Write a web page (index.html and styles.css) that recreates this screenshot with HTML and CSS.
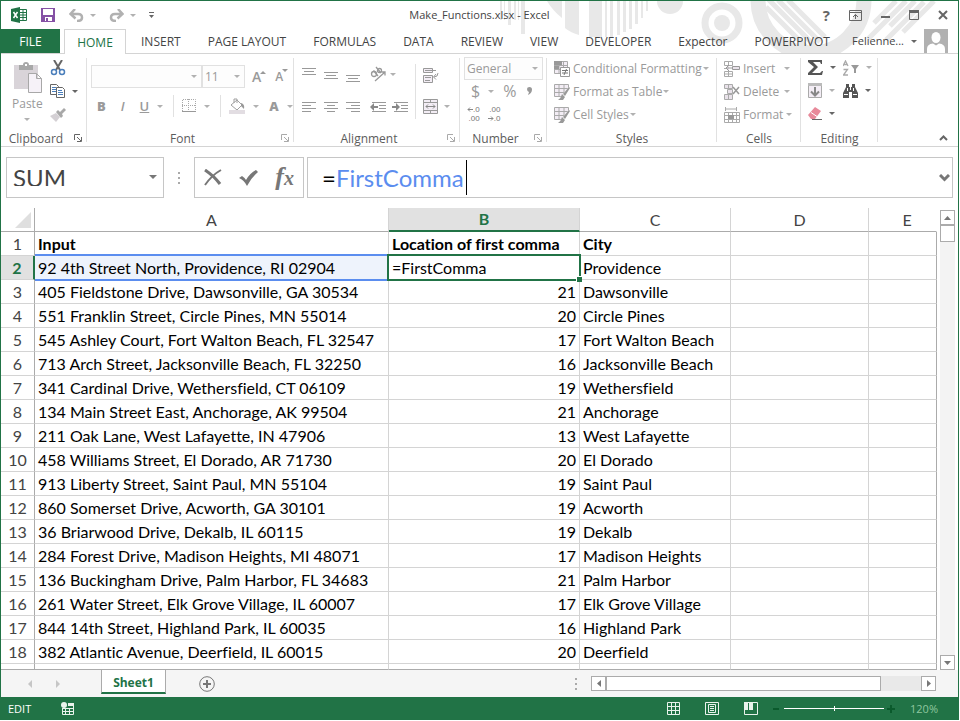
FILE: index.html
```html
<!DOCTYPE html>
<html lang="en">
<head>
<meta charset="utf-8">
<title>Make_Functions.xlsx - Excel</title>
<link rel="stylesheet" href="styles.css">
</head>
<body>
<div class="window">
  <svg class="art" viewBox="490 1 468 52" width="468" height="52" aria-hidden="true">
    <g fill="#e8e8e8">
      <path d="M500 1h2v19h-2zM504 1h1v19h-1zM508 1h3v24h-3zM514 1h2v19h-2zM518 1h1v19h-1zM521 1h4v33h-4z"/>
      <path d="M547 1h15v17q-9-7-15-17zM565 1h14v34q-8-2-14-7zM589 1h13v36h-13zM605 1h2v36h-2zM610 1h3v36h-3zM617 1h3v34h-3zM623 1h3v31h-3zM629 1h3v28h-3zM635 1h3v23h-3zM641 1h2v17h-2zM646 1h2v10h-2z"/>
      <circle cx="670" cy="1" r="13"/><circle cx="722" cy="23" r="8"/>
    </g>
    <g fill="none" stroke="#e8e8e8">
      <circle cx="722" cy="23" r="17" stroke-width="7"/>
      <circle cx="811" cy="0" r="53" stroke-width="15"/>
      <path stroke-width="5" d="M766 7l43 43M768 -1l47 47M778 0l42 42M788 0l37 37"/>
      <path stroke-width="5" d="M874 23l22-22M868 39l38-38M890 26l25-25M886 40l38-38M903 32l31-31"/>
    </g>
  </svg>

  <header class="titlebar">
    <div class="quick">
      <svg width="16" height="16"><path fill="#217346" d="M0 2l9-2v16l-9-2z"/><path fill="none" stroke="#217346" d="M9 2.500h6.500v11H9M9 5.500h6M9 8h6M9 10.500h6M12 3v10"/><path stroke="#fff" stroke-width="1.500" d="M2.500 5l4 6M6.500 5l-4 6"/></svg>
      <button aria-label="Save"><svg width="14" height="14"><path fill="#8551a5" d="M0 0h14v14H0z"/><path fill="#fff" d="M2 1h10v6H2zM4 9h7v4H4z"/><path fill="#8551a5" d="M5 10h2v3H5z"/></svg></button>
      <button class="wide" aria-label="Undo"><svg width="15" height="13"><path fill="none" stroke="#b1b1b1" stroke-width="2.500" d="M2 5h7q4 0 4 3.500T8 12M6 0L1.500 5l5 4.500"/></svg><i class="caret"></i></button>
      <button class="wide" aria-label="Redo"><svg width="15" height="13"><path fill="none" stroke="#b1b1b1" stroke-width="2.500" d="M13 5H6q-4 0-4 3.500T7 12M9 0l4.500 5-5 4.500"/></svg><i class="caret"></i></button>
      <button aria-label="Customize"><svg width="5" height="7"><path fill="#666" d="M0 0h5v1H0zM0 3h5L2.500 6z"/></svg></button>
    </div>
    <h1>Make_Functions.xlsx - Excel</h1>
    <div class="controls">
      <button class="help" aria-label="Help">?</button>
      <button aria-label="Ribbon options"><svg width="13" height="11"><path fill="none" stroke="#666" d="M.500.500h12v10H.500zM1 2.500h11M6.500 9V4.500M4 7l2.500-2.500L9 7"/></svg></button>
      <button aria-label="Minimize"><svg width="9" height="11"><path fill="#666" d="M0 6h9v2H0z"/></svg></button>
      <button aria-label="Maximize"><svg width="10" height="10"><path fill="none" stroke="#666" d="M.500 1h9v8.500h-9z"/><path fill="#666" d="M0 0h10v3H0z"/></svg></button>
      <button aria-label="Close"><svg width="10" height="10"><path stroke="#666" stroke-width="2" d="M1 1l8 8M9 1L1 9"/></svg></button>
    </div>
  </header>

  <nav class="tabs">
    <button class="file">FILE</button><button class="active">HOME</button><button>INSERT</button><button>PAGE LAYOUT</button><button>FORMULAS</button><button>DATA</button><button>REVIEW</button><button>VIEW</button><button>DEVELOPER</button><button>Expector</button><button class="last">POWERPIVOT</button>
    <button class="user">Felienne...<i class="caret dark"></i></button>
    <svg class="avatar" width="24" height="24"><path fill="#b1b1b1" d="M0 0h24v24H0z"/><g fill="#fff"><ellipse cx="12" cy="8.500" rx="4.500" ry="5.500"/><path d="M3 24v-4q0-5 6-5.500l3 2 3-2q6 .5 6 5.500v4z"/></g></svg>
  </nav>

  <section class="ribbon">
    <div class="group clipboard">
      <div class="body">
        <button class="paste"><svg width="28" height="31"><path fill="#d9d4d9" d="M0 3h24v24H0z"/><path fill="#a8a8a8" d="M5 3h4q0-3 3-3t3 3h4v5H5z"/><path fill="#fff" d="M11 2h2v2h-2z"/><path fill="#f6f2f8" stroke="#a8a8a8" d="M14.500 11.500h8l5 5v14h-13zM22.500 11.500v5h5"/></svg><span>Paste</span><i class="caret"></i></button>
        <div class="stack">
          <button aria-label="Cut"><svg width="16" height="16"><path stroke="#666" stroke-width="2" d="M4 0l6 10M12 0L6 10"/><g fill="none" stroke="#4a7ebb" stroke-width="1.500"><circle cx="4" cy="12" r="2.500"/><circle cx="12" cy="12" r="2.500"/></g></svg></button>
          <button aria-label="Copy"><svg width="16" height="15"><path fill="#fff" stroke="#666" d="M.500.500h6l2 2v8h-8z"/><path stroke="#4a7ebb" d="M2 3.500h4M2 5.500h4M2 7.500h4"/><path fill="#fff" stroke="#666" d="M6.500 3.500h6l2 2v8h-8z"/><path stroke="#4a7ebb" d="M8 6.500h4M8 8.500h5M8 10.500h5"/></svg><i class="caret dark"></i></button>
          <button aria-label="Format Painter"><svg width="16" height="15"><path fill="#d4d0d4" d="M0 9l6-3 4 4-4 5z"/><path fill="#a8a8a8" d="M6 5l2-2 2 2 4-4 2 2-4 4 1 2-2 2z"/></svg></button>
        </div>
      </div>
      <h2>Clipboard</h2><svg class="launch dark" width="8" height="8"><use href="#launch"/></svg>
    </div>

    <div class="group font">
      <div class="body">
        <div class="line top">
          <span class="drop name"><select aria-label="Font"><option></option></select></span><span class="drop size"><select aria-label="Font size"><option>11</option></select></span>
          <button class="glyph grow" aria-label="Grow font">A<i class="up"></i></button>
          <button class="glyph shrink" aria-label="Shrink font">A<i class="down"></i></button>
        </div>
        <div class="line low">
          <button class="glyph"><b>B</b></button><button class="glyph"><em>I</em></button><button class="glyph u"><u>U</u><i class="caret"></i></button><i class="bar"></i>
          <button aria-label="Borders"><svg width="14" height="14"><path fill="none" stroke="#a8a8a8" stroke-dasharray="1 1" d="M.500 12V.500h13V12M6.500 0v13M0 6.500h13"/><path fill="#999" d="M0 12h14v1H0z"/></svg><i class="caret"></i></button><i class="bar"></i>
          <button aria-label="Fill color"><svg width="16" height="16"><path fill="#fff" stroke="#a0a0a0" d="M2 7l6-5 5 5-5 5zM5 5V1h3v4"/><path fill="#999" d="M12 5q4 1 3 6l-3-3z"/><path fill="#e2dde2" d="M0 12h16v4H0z"/></svg><i class="caret"></i></button>
          <button class="glyph"><b>A</b><i class="caret"></i></button>
        </div>
      </div>
      <h2>Font</h2><svg class="launch" width="8" height="8"><use href="#launch"/></svg>
    </div>

    <div class="group align">
      <div class="body">
        <div class="aligns">
          <div class="line top">
            <button aria-label="Top"><svg width="14" height="16"><path stroke="#999" d="M0 2.500h14M2 5.500h10M0 8.500h14"/></svg></button>
            <button aria-label="Middle"><svg width="14" height="16"><path stroke="#999" d="M0 6.500h14M2 9.500h10M0 12.500h14"/></svg></button>
            <button aria-label="Bottom"><svg width="14" height="16"><path stroke="#999" d="M0 9.500h14M2 12.500h10M0 15.500h14"/></svg></button>
            <button class="orient" aria-label="Orientation"><svg width="16" height="16"><g fill="none" stroke="#999" stroke-width="1.300"><circle cx="4" cy="8" r="2.500"/><path d="M3.500 4.500L8 10M6 1l5 6"/><circle cx="9.500" cy="4.500" r="2"/><path d="M5 15L15 6M11.500 6H15v3.500"/></g></svg><i class="caret"></i></button>
          </div>
          <div class="line low">
            <button aria-label="Left"><svg width="14" height="12"><path stroke="#999" d="M0 1.500h14M0 4.500h9M0 7.500h14M0 10.500h9"/></svg></button>
            <button aria-label="Center"><svg width="14" height="12"><path stroke="#999" d="M0 1.500h14M3 4.500h8M0 7.500h14M3 10.500h8"/></svg></button>
            <button aria-label="Right"><svg width="14" height="12"><path stroke="#999" d="M0 1.500h14M5 4.500h9M0 7.500h14M5 10.500h9"/></svg></button>
            <button class="orient" aria-label="Decrease indent"><svg width="16" height="12"><path stroke="#999" d="M2 1.500h14M9 4.500h7M9 7.500h7M2 10.500h14"/><path fill="#888" d="M0 6l4-4v3h4v2H4v3z"/></svg></button>
            <button aria-label="Increase indent"><svg width="16" height="12"><path stroke="#999" d="M2 1.500h14M9 4.500h7M9 7.500h7M2 10.500h14"/><path fill="#888" d="M8 6L4 2v3H0v2h4v3z"/></svg></button>
          </div>
        </div>
        <i class="bar tall"></i>
        <div class="wraps">
          <button aria-label="Wrap text"><svg width="16" height="15"><path fill="#f3edf5" stroke="#999" d="M.500.500h9v4h-9zM.500 7.500h9v7h-9z"/><path stroke="#999" fill="none" d="M2 2.500h11M2 9.500h6M2 12.500h5M15 5q0 4-4 4M13 6l-2.500 3L13 11.500"/></svg></button>
          <button aria-label="Merge"><svg width="15" height="15"><path fill="#f3edf5" stroke="#999" d="M.500.500h14v14H.500zM0 3.500h15M0 11.500h15M7.500 0v3M7.500 12v3"/><path fill="none" stroke="#888" d="M3 7.500h9M5 5.500l-2 2 2 2M10 5.500l2 2-2 2"/></svg><i class="caret"></i></button>
        </div>
      </div>
      <h2>Alignment</h2><svg class="launch" width="8" height="8"><use href="#launch"/></svg>
    </div>

    <div class="group number">
      <div class="body">
        <span class="drop"><select aria-label="Number format"><option>General</option></select></span>
        <div class="line marks"><button>$<i class="caret"></i></button><button>%</button><button class="comma" aria-label="Comma style"><svg width="5" height="8"><path fill="#999" d="M0 2q0-2 2.500-2T5 2.500Q5 6 1 8l1-3Q0 4.500 0 2z"/></svg></button></div>
        <div class="line decimals"><button aria-label="Increase decimal"><span><svg width="6" height="5"><path fill="none" stroke="#888" d="M6 2.500H1M3 .500l-2 2 2 2"/></svg>.0</span><span>.00</span></button><button aria-label="Decrease decimal"><span>.00</span><span><svg width="6" height="5"><path fill="none" stroke="#888" d="M0 2.500h5M3 .500l2 2-2 2"/></svg>.0</span></button></div>
      </div>
      <h2>Number</h2><svg class="launch" width="8" height="8"><use href="#launch"/></svg>
    </div>

    <div class="group list styles">
      <div class="body">
        <button><svg width="16" height="16"><path fill="#f3edf5" stroke="#aaa" d="M.500.500h13v12H.500zM5 0v12M9.500 0v12M0 4.500h14M0 8.500h14"/><path fill="#999" d="M0 0h8v4H0zM0 5h5v3H0z"/><path fill="#fff" stroke="#999" d="M6.500 6.500h9v9h-9z"/><path stroke="#777" d="M8 9.500h6M8 12h6M12.500 8L10 14"/></svg>Conditional Formatting<i class="caret"></i></button>
        <button><svg width="16" height="16"><use href="#tablebrush"/></svg>Format as Table<i class="caret"></i></button>
        <button><svg width="16" height="16"><use href="#tablebrush"/></svg>Cell Styles<i class="caret"></i></button>
      </div>
      <h2>Styles</h2>
    </div>

    <div class="group list cells">
      <div class="body">
        <button><svg width="16" height="16"><path fill="none" stroke="#aaa" d="M.500.500h8v4h-8zM4.500 0v4M.500 10.500h8v5h-8zM4.500 10v6M0 7.500h3M0 13h9"/><path fill="#e9e2ea" stroke="#999" d="M8.500 5.500h7v3h-7zM8 7H2M5 4L2 7l3 3"/></svg>Insert<i class="caret"></i></button>
        <button><svg width="16" height="16"><path fill="#e9e2ea" stroke="#aaa" d="M.500.500h8v4h-8zM4.500 0v4M3.500 5.500h5v4h-5zM.500 10.500h8v5h-8zM4.500 10v6"/><path stroke="#999" stroke-width="1.500" d="M9 3l6 7M15 3L9 10"/></svg>Delete<i class="caret"></i></button>
        <button><svg width="16" height="16"><path fill="none" stroke="#aaa" d="M1.500 0v4M1 2h12M12.500 0v4M.500 5.500h15v10H.500zM4.500 5v10M8.500 5v10M12.500 5v10M0 8.500h16M0 12.500h16"/><path fill="#999" d="M4 8h6v4H4z"/></svg>Format<i class="caret"></i></button>
      </div>
      <h2>Cells</h2>
    </div>

    <div class="group editing">
      <div class="body">
        <button aria-label="Sum"><svg width="15" height="15"><path fill="#555" d="M0 0h14v4h-1l-1-2H5l5 5-6 6h8l2-2h1l-1 4H0v-2l6-6-6-5z"/></svg><i class="caret dark"></i></button>
        <button aria-label="Sort"><svg width="16" height="16"><path fill="none" stroke="#aaa" stroke-width="1.300" d="M0 6L2.500 1 5 6M1 4.500h3M.500 9.500h4L.500 15H5"/><path fill="#999" d="M8 5h8l-3 4v4h-2V9z"/></svg><i class="caret"></i></button>
        <button aria-label="Fill"><svg width="14" height="15"><path fill="#f3edf5" stroke="#aaa" d="M.500.500h13v14H.500z"/><path fill="#bbb" d="M0 0h14v3H0z"/><path fill="none" stroke="#888" stroke-width="2" d="M7 4v8M3 8.500l4 4 4-4"/></svg><i class="caret"></i></button>
        <button aria-label="Find"><svg width="15" height="14"><path fill="#555" d="M3 0h3v3h3V0h3v3l3 6v5H9V8H6v6H0V9l3-6z"/><path stroke="#fff" d="M1 10.500h4M10 10.500h4M4.500 4v3M10.500 4v3M7.500 3v3"/></svg><i class="caret dark"></i></button>
        <button aria-label="Clear"><svg width="14" height="14"><path fill="#e8899a" d="M0 8l7-8 6 4-6 8H3z"/><path fill="none" stroke="#fff" d="M3 5.500l6 4"/><path fill="#666" d="M4 12h10v1H4z"/></svg><i class="caret dark"></i></button>
      </div>
      <h2>Editing</h2>
    </div>
    <button class="collapse" aria-label="Collapse ribbon"><svg width="9" height="6"><path fill="none" stroke="#666" stroke-width="2" d="M1 5l3.500-3.500L8 5"/></svg></button>
  </section>

  <section class="formula">
    <span class="drop namebox"><select aria-label="Name box"><option>SUM</option></select></span>
    <svg class="grip" width="2" height="12"><use href="#dots"/></svg>
    <div class="actions">
      <button aria-label="Cancel"><svg width="18" height="17"><path fill="none" stroke="#777" stroke-width="3" d="M1 1q9 6 15 14"/><path fill="none" stroke="#777" stroke-width="2" d="M17 1Q8 6 1 16"/></svg></button>
      <button aria-label="Enter"><svg width="20" height="16"><path fill="#777" d="M0 8l3-2q3 2 4 4Q11 3 17 0l2 2Q12 8 8 16 5 10 0 8z"/></svg></button>
      <button class="fx">f<small>x</small></button>
    </div>
    <div class="entry"><label for="fx">=</label><input id="fx" value="FirstComma" size="8" aria-label="Formula"><i class="cursor"></i>
      <button aria-label="Expand"><svg width="11" height="8"><path fill="none" stroke="#777" stroke-width="3" d="M1 1l4.500 4.500L10 1"/></svg></button></div>
  </section>

  <main class="sheet">
    <table>
      <colgroup><col class="n"><col class="a"><col class="b"><col class="c"><col class="d"><col></colgroup>
      <thead><tr><th class="corner"><svg width="16" height="16"><path fill="#dfdfdf" d="M16 0v16H0z"/></svg></th><th>A</th><th class="on">B</th><th>C</th><th>D</th><th>E</th></tr></thead>
      <tbody>
        <tr class="titles"><th>1</th><td>Input</td><td>Location of first comma</td><td>City</td><td></td><td></td></tr>
        <tr class="current"><th>2</th><td class="ref">92 4th Street North, Providence, RI 02904</td><td class="edit">=FirstComma</td><td>Providence</td><td></td><td></td></tr>
        <tr><th>3</th><td>405 Fieldstone Drive, Dawsonville, GA 30534</td><td>21</td><td>Dawsonville</td><td></td><td></td></tr>
        <tr><th>4</th><td>551 Franklin Street, Circle Pines, MN 55014</td><td>20</td><td>Circle Pines</td><td></td><td></td></tr>
        <tr><th>5</th><td>545 Ashley Court, Fort Walton Beach, FL 32547</td><td>17</td><td>Fort Walton Beach</td><td></td><td></td></tr>
        <tr><th>6</th><td>713 Arch Street, Jacksonville Beach, FL 32250</td><td>16</td><td>Jacksonville Beach</td><td></td><td></td></tr>
        <tr><th>7</th><td>341 Cardinal Drive, Wethersfield, CT 06109</td><td>19</td><td>Wethersfield</td><td></td><td></td></tr>
        <tr><th>8</th><td>134 Main Street East, Anchorage, AK 99504</td><td>21</td><td>Anchorage</td><td></td><td></td></tr>
        <tr><th>9</th><td>211 Oak Lane, West Lafayette, IN 47906</td><td>13</td><td>West Lafayette</td><td></td><td></td></tr>
        <tr><th>10</th><td>458 Williams Street, El Dorado, AR 71730</td><td>20</td><td>El Dorado</td><td></td><td></td></tr>
        <tr><th>11</th><td>913 Liberty Street, Saint Paul, MN 55104</td><td>19</td><td>Saint Paul</td><td></td><td></td></tr>
        <tr><th>12</th><td>860 Somerset Drive, Acworth, GA 30101</td><td>19</td><td>Acworth</td><td></td><td></td></tr>
        <tr><th>13</th><td>36 Briarwood Drive, Dekalb, IL 60115</td><td>19</td><td>Dekalb</td><td></td><td></td></tr>
        <tr><th>14</th><td>284 Forest Drive, Madison Heights, MI 48071</td><td>17</td><td>Madison Heights</td><td></td><td></td></tr>
        <tr><th>15</th><td>136 Buckingham Drive, Palm Harbor, FL 34683</td><td>21</td><td>Palm Harbor</td><td></td><td></td></tr>
        <tr><th>16</th><td>261 Water Street, Elk Grove Village, IL 60007</td><td>17</td><td>Elk Grove Village</td><td></td><td></td></tr>
        <tr><th>17</th><td>844 14th Street, Highland Park, IL 60035</td><td>16</td><td>Highland Park</td><td></td><td></td></tr>
        <tr><th>18</th><td>382 Atlantic Avenue, Deerfield, IL 60015</td><td>20</td><td>Deerfield</td><td></td><td></td></tr>
        <tr class="cut"><th></th><td></td><td></td><td></td><td></td><td></td></tr>
      </tbody>
    </table>
    <div class="vscroll">
      <button aria-label="Scroll up"><svg width="7" height="4"><path fill="#777" d="M0 4h7L3.500 0z"/></svg></button>
      <div class="thumb"></div>
      <button class="end" aria-label="Scroll down"><svg width="7" height="4"><path fill="#777" d="M0 0h7L3.500 4z"/></svg></button>
    </div>
  </main>

  <div class="sheets">
    <button class="nav" aria-label="Previous sheet"><svg width="4" height="8"><path fill="#c6c6c6" d="M4 0v8L0 4z"/></svg></button>
    <button class="nav" aria-label="Next sheet"><svg width="4" height="8"><path fill="#c6c6c6" d="M0 0v8l4-4z"/></svg></button>
    <button class="sheettab">Sheet1</button>
    <button class="add" aria-label="New sheet"><svg width="16" height="16"><circle cx="8" cy="8" r="7.300" fill="none" stroke="#777"/><path stroke="#777" stroke-width="2" d="M8 4v8M4 8h8"/></svg></button>
    <svg class="grip" width="2" height="12"><use href="#dots"/></svg>
    <div class="hscroll">
      <button aria-label="Scroll left"><svg width="4" height="7"><path fill="#777" d="M4 0v7L0 3.500z"/></svg></button>
      <div class="thumb"></div>
      <button class="end" aria-label="Scroll right"><svg width="4" height="7"><path fill="#777" d="M0 0v7l4-3.500z"/></svg></button>
    </div>
  </div>

  <footer class="status">
    <span>EDIT</span>
    <svg class="macro" width="13" height="13"><circle cx="3" cy="3" r="3" fill="#e9f3ec"/><path fill="#e9f3ec" d="M7 1h6v3H7z"/><path fill="none" stroke="#e9f3ec" d="M1.500 6v6.500h11V4M1 6.500h11M1 9.500h11M4.500 6v6M8.500 6v6"/></svg>
    <div class="views">
      <button aria-label="Normal view"><svg width="13" height="13"><path fill="none" stroke="#e9f3ec" d="M.500.500h12v12H.500zM4.500 0v13M8.500 0v13M0 4.500h13M0 8.500h13"/></svg></button>
      <button aria-label="Page layout view"><svg width="14" height="13"><path fill="none" stroke="#e9f3ec" d="M.500.500h13v12H.500zM3.500 2.500h7v8h-7zM5 4.500h4M5 6.500h4M5 8.500h4"/></svg></button>
      <button aria-label="Page break view"><svg width="14" height="13"><path fill="none" stroke="#e9f3ec" d="M.500.500h13v12H.500z"/><path fill="#e9f3ec" d="M0 0h4v8H0zM5 0h4v8H5z"/></svg></button>
    </div>
    <button class="zoom" aria-label="Zoom out"><svg width="7" height="7"><path fill="#0a5a2c" d="M0 3h6v2H0z"/></svg></button>
    <input type="range" aria-label="Zoom" min="0" max="100" value="50">
    <button class="zoom" aria-label="Zoom in"><svg width="8" height="8"><path fill="#0a5a2c" d="M3 0h2v3h3v2H5v3H3V5H0V3h3z"/></svg></button>
    <span class="percent">120%</span>
  </footer>
</div>
<svg class="defs" width="0" height="0">
  <g id="launch"><path fill="none" stroke="currentColor" d="M.500 6V.500H6M3 3l4 4M7.500 3v4.500H3"/></g>
  <g id="dots" fill="#aaa"><path d="M0 0h2v2H0zM0 5h2v2H0zM0 10h2v2H0z"/></g>
  <g id="tablebrush"><path fill="#f3edf5" stroke="#aaa" d="M.500.500h14v12H.500zM5 0v12M10 0v12M0 4.500h14M0 8.500h14"/><path fill="#fff" d="M16 2v14H6l1-4z"/><path fill="#999" d="M15 3l1 1-5 8-2-2zM8 10l3 3-2 3H4q3-2 4-6z"/></g>
</svg>
</body>
</html>
```
FILE: styles.css
```css
* { box-sizing: border-box; }
body { margin: 0; padding: 0 1px 1px 0; background: #fff; color: #444; font: 12px/16px "Open Sans", "Noto Sans", sans-serif; }
button, select, input { margin: 0; padding: 0; border: 0; background: none; color: inherit; font: inherit; appearance: none; }
button { display: flex; align-items: center; flex: none; }
svg { display: block; flex: none; }
h1, h2 { margin: 0; font: inherit; }
.defs { position: absolute; }
.window { position: relative; display: flex; flex-direction: column; border: 1px solid #217346; border-bottom: 0; }
.art { position: absolute; top: 0; right: 0; }
.caret { flex: none; border: 3px solid transparent; border-top-color: #b1b1b1; border-bottom: 0; }
.caret.dark { border-top-color: #666; }
.bar { width: 1px; height: 22px; background: #e1e1e1; }

.titlebar { position: relative; display: grid; grid-template-columns: 1fr auto 1fr; align-items: center; height: 28px; }
.titlebar h1 { font-size: 11px; }
.quick { display: flex; align-items: center; gap: 14px; padding-left: 10px; }
.quick .wide { gap: 6px; width: 26px; }
.controls { display: flex; align-items: center; justify-content: flex-end; gap: 19px; padding-right: 10px; }
.help { font-size: 15px; font-weight: 700; color: #666; }

.tabs { position: relative; display: flex; height: 25px; border-bottom: 1px solid #d4d4d4; }
.tabs button { justify-content: center; height: 24px; margin-right: 27px; padding-top: 2px; }
.tabs .file { width: 59px; margin-right: 4px; background: #217346; color: #fff; }
.tabs .active { width: 62px; height: 25px; margin-right: 15px; border: 1px solid #d4d4d4; border-bottom: 0; background: #fff; color: #217346; }
.tabs .last { margin-right: 0; }
.tabs .user { gap: 7px; margin: 0 7px 0 auto; padding-top: 0; font-size: 11px; }
.avatar { margin-right: 10px; }

.ribbon { position: relative; display: flex; height: 93px; border-bottom: 1px solid #d4d4d4; color: #9a9a9a; }
.group { position: relative; display: flex; flex-direction: column; }
.group::after { content: ""; position: absolute; top: 4px; right: 0; bottom: 4px; width: 1px; background: #e1e1e1; }
.group .body { height: 76px; flex: none; }
.group h2 { padding-top: 1px; color: #5c5c5c; text-align: center; }
.launch { position: absolute; right: 5px; bottom: 4px; color: #aaa; }
.launch.dark { color: #666; }
.line { display: flex; align-items: center; }
.clipboard { width: 86px; }
.clipboard h2 { padding-right: 16px; }
.clipboard .body { display: flex; padding: 6px 0 0 11px; gap: 7px; }
.paste { flex-direction: column; align-self: flex-start; }
.paste svg { margin: 2px 0 3px 2px; }
.paste .caret { margin-top: 6px; }
.stack { display: flex; flex-direction: column; gap: 8px; }
.stack button { gap: 6px; }

.drop { position: relative; display: flex; border: 1px solid #e1e1e1; background: #fdfdfd; }
.drop::after { content: ""; position: absolute; top: 9px; right: 4px; border: 3px solid transparent; border-top-color: #b1b1b1; border-bottom: 0; }
.drop select { width: 100%; padding: 0 2px; }
.font { width: 207px; }
.font h2 { padding-right: 16px; }
.font .body { padding: 11px 0 0 4px; }
.font .drop { height: 23px; }
.name { width: 111px; }
.size { width: 43px; }
.glyph { font-size: 14px; }
.grow, .shrink { position: relative; margin-left: 7px; font-weight: 600; }
.shrink { margin-left: 14px; font-size: 12px; }
.up, .down { position: absolute; right: -5px; top: 2px; border: 3px solid transparent; border-bottom-color: #999; border-top: 0; }
.down { top: 0; border: 3px solid transparent; border-top-color: #999; border-bottom: 0; }
.font .low { height: 22px; margin-top: 7px; gap: 10px; padding-left: 6px; }
.font .low button { gap: 8px; }
.font .low .glyph { font-size: 13px; font-weight: 600; }
.font .low .glyph + .glyph { margin-left: 5px; }
.font .low .bar + button { margin-left: -2px; }

.align { width: 166px; }
.align h2, .number h2 { padding-right: 16px; }
.align .body { display: flex; padding: 10px 0 0 8px; }
.align .line { gap: 8px; height: 20px; }
.align .low { margin-top: 13px; }
.align .line .orient { margin-left: 2px; gap: 4px; }
.align .low .orient { margin-right: -2px; }
.aligns { width: 113px; }
.tall { height: 55px; }
.wraps { display: flex; flex-direction: column; gap: 16px; padding: 4px 0 0 7px; }
.wraps button { gap: 6px; }

.number { width: 87px; }
.number .body { padding: 3px 4px 0 4px; }
.number .drop { height: 23px; }
.marks { height: 22px; padding-left: 7px; gap: 9px; font-size: 16px; }
.marks button { gap: 8px; }
.marks .comma { margin-left: 2px; }
.decimals { gap: 8px; padding: 3px 0 0 3px; }
.decimals button { flex-direction: column; align-items: flex-end; font: 8px/9px "Liberation Sans", sans-serif; color: #777; }
.decimals span { display: flex; align-items: center; }

.list .body { display: flex; flex-direction: column; padding: 3px 0 0 7px; }
.list button { height: 23px; gap: 3px; }
.styles { width: 170px; }
.styles .caret { margin-left: -2px; }
.cells { width: 84px; }
.cells button { width: 66px; }
.cells .caret { margin-left: auto; }
.editing { width: 77px; }
.editing .body { display: grid; grid-template-columns: 35px auto; grid-auto-rows: 23px; justify-content: start; padding: 2px 0 0 7px; }
.editing button { gap: 7px; }
.collapse { margin: 81px 10px auto auto; }

.formula { display: flex; align-items: center; height: 61px; padding: 0 5px; font-size: 24px; font-variant-ligatures: none; }
.namebox, .actions, .entry { height: 41px; border: 1px solid #c6c6c6; background: #fff; }
.namebox { width: 158px; font-family: Lato, sans-serif; }
.namebox::after { top: 17px; right: 6px; border-width: 4px 4px 0; border-top-color: #777; }
.namebox select { padding: 0 6px; }
.grip { margin: 0 14px; }
.actions { display: flex; align-items: center; justify-content: space-between; width: 110px; padding: 0 9px; color: #777; }
.fx { align-items: baseline; font: italic 700 26px/30px "Liberation Serif", serif; }
.fx small { font-size: 20px; }
.entry { display: flex; flex: 1; align-items: center; margin-left: 3px; padding: 0 2px 0 14px; color: #000; font-family: Lato, sans-serif; }
.entry input { width: auto; field-sizing: content; color: #5b8def; }
.cursor { width: 1px; height: 35px; margin-left: 2px; background: #000; }
.entry button { margin-left: auto; }

.sheet { display: flex; }
table { flex: 1; width: 100%; table-layout: fixed; border-collapse: separate; border-spacing: 0; font: 16px/22px Lato, sans-serif; font-variant-ligatures: none; color: #000; }
.n { width: 34px; } .a { width: 354px; } .b { width: 191px; } .c { width: 151px; } .d { width: 138px; }
th, td { height: 24px; padding: 0 3px; border-right: 1px solid #d4d4d4; border-bottom: 1px solid #d4d4d4; white-space: nowrap; }
th { font-weight: 400; color: #444; }
thead th { border-bottom-color: #ababab; }
th:first-child { border-right-color: #ababab; }
td:last-child { border-right-color: #ababab; }
thead th:last-child { padding-left: 12px; border-right-color: #fff; }
.corner svg { margin-left: 11px; }
.on { border-bottom: 2px solid #217346; background: #e1e1e1; color: #217346; font-weight: 700; }
td:nth-child(3) { text-align: right; }
.titles td:nth-child(n) { font-weight: 700; text-align: left; }
.current th { border-right: 2px solid #217346; background: #e1e1e1; color: #217346; font-weight: 700; }
.ref, .current .edit { position: relative; text-align: left; }
.ref { background: #eef3fc; }
.ref::after { content: ""; position: absolute; inset: -2px 0; border: solid #5b8def; border-width: 2px 0; }
.edit::before { content: ""; position: absolute; inset: -2px; border: 2px solid #217346; }
.edit::after { content: ""; position: absolute; right: -3px; bottom: -3px; width: 5px; height: 5px; border: solid #fff; border-width: 1px 0 0 1px; background: #217346; }
.cut th, .cut td { height: 6px; border-bottom-color: #ababab; }

.vscroll { display: flex; flex-direction: column; width: 21px; padding: 2px 3px 0; background: #f3f3f3 content-box; }
.vscroll button, .hscroll button { justify-content: center; width: 15px; height: 15px; border: 1px solid #ababab; background: #fff; }
.thumb { border: 1px solid #ababab; background: #fff; }
.vscroll .thumb { height: 17px; }
.end { margin-left: auto; }
.vscroll .end { margin: auto 0 0; }

.sheets { display: flex; align-items: center; height: 27px; background: #f5f5f5; }
.nav { margin-left: 27px; }
.nav + .nav { margin-left: 24px; }
.sheettab { justify-content: center; align-self: flex-start; width: 65px; height: 24px; margin-left: 41px; padding-top: 3px; border: 1px solid #ababab; border-width: 0 1px 2px; border-bottom-color: #217346; background: #fff; color: #217346; font-weight: 700; }
.add { margin-left: 33px; }
.sheets .grip { margin-left: auto; }
.hscroll { display: flex; width: 345px; margin-right: 22px; background: #e9e9e9; }
.hscroll .thumb { width: 275px; }

.status { display: flex; align-items: center; height: 23px; padding: 0 20px 0 7px; background: #217346; color: #fff; font-size: 11px; }
.macro { margin-left: 30px; }
.views { display: flex; gap: 25px; margin: 0 15px 0 auto; }
.zoom { width: 8px; }
.status input { width: 100px; height: 9px; margin: 0 3px; background: linear-gradient(#fff, #fff) center / 100% 1px no-repeat; }
.status input::-webkit-slider-thumb { appearance: none; width: 1px; height: 5px; background: #fff; }
.percent { margin-left: 15px; color: #8fc79f; }
```
